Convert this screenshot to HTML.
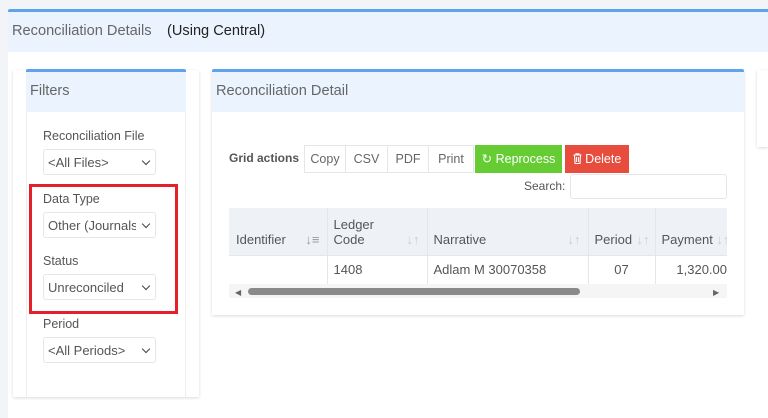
<!DOCTYPE html>
<html><head><style>
*{box-sizing:border-box;margin:0;padding:0}
body{width:768px;height:418px;background:#f3f4f7;font-family:"Liberation Sans",sans-serif;position:relative;overflow:hidden;color:#444}
.a{position:absolute}
.sel{position:absolute;left:43px;width:113px;height:26px;border:1px solid #e3e6ea;border-radius:3px;background:#fff;font-size:13px;color:#555;padding:5px 0 0 4px;white-space:nowrap;overflow:hidden}
.sel:after{content:"";position:absolute;right:6px;top:8px;width:5px;height:5px;border-right:1.5px solid #444;border-bottom:1.5px solid #444;transform:rotate(45deg)}
.sel span{display:block;width:88px;overflow:hidden}
.lbl{position:absolute;left:43px;font-size:12.5px;color:#555}
.btn{position:absolute;top:145px;height:28px;border:1px solid #e3e6ea;background:#fff;font-size:12.5px;color:#666;text-align:center;line-height:26px}
th,td{font-size:13px;color:#555;text-align:left;font-weight:normal}
th{vertical-align:bottom;padding-bottom:8px}
</style></head><body>
<div class="a" style="left:8px;top:9px;width:760px;height:409px;background:#fff"></div>
<div class="a" style="left:8px;top:9px;width:760px;height:3px;background:#5ea3ec;border-radius:2px 0 0 0"></div>
<div class="a" style="left:8px;top:12px;width:760px;height:40px;background:#ebf4fe"></div>
<div class="a" style="left:12px;top:23px;font-size:14.6px;color:#666">Reconciliation Details</div>
<div class="a" style="left:167px;top:23px;font-size:14.6px;color:#222">(Using Central)</div>

<div class="a" style="left:13px;top:70px;width:186px;height:327px;background:#fff;box-shadow:0 1px 3px rgba(0,0,0,.15)"></div>
<div class="a" style="left:26px;top:69px;width:160px;height:328px;border-left:1px solid #eee;border-right:1px solid #eee"></div>
<div class="a" style="left:26px;top:69px;width:160px;height:3px;background:#5ea3ec;border-radius:2px 2px 0 0"></div>
<div class="a" style="left:26px;top:72px;width:160px;height:40px;background:#ebf4fe"></div>
<div class="a" style="left:30px;top:83px;font-size:14.5px;color:#666">Filters</div>
<div class="lbl" style="top:129px">Reconciliation File</div>
<div class="sel" style="top:149px"><span>&lt;All Files&gt;</span></div>
<div class="lbl" style="top:192px">Data Type</div>
<div class="sel" style="top:212px"><span>Other (Journals)</span></div>
<div class="lbl" style="top:254px">Status</div>
<div class="sel" style="top:274px"><span>Unreconciled</span></div>
<div class="lbl" style="top:317px">Period</div>
<div class="sel" style="top:337px"><span>&lt;All Periods&gt;</span></div>
<div class="a" style="left:29px;top:184px;width:149px;height:130px;border:3px solid #e4202a"></div>

<div class="a" style="left:212px;top:70px;width:532px;height:245px;background:#fff;box-shadow:0 1px 3px rgba(0,0,0,.15)"></div>
<div class="a" style="left:212px;top:69px;width:532px;height:3px;background:#5ea3ec;border-radius:2px 2px 0 0"></div>
<div class="a" style="left:212px;top:72px;width:532px;height:40px;background:#ebf4fe"></div>
<div class="a" style="left:216px;top:83px;font-size:14.6px;color:#666">Reconciliation Detail</div>
<div class="a" style="left:757px;top:70px;width:11px;height:77px;background:#fff;box-shadow:0 1px 3px rgba(0,0,0,.15)"></div>

<div class="a" style="left:229px;top:151px;font-size:12px;font-weight:bold;color:#555">Grid actions</div>
<div class="btn" style="left:304px;width:42px">Copy</div>
<div class="btn" style="left:345px;width:43px">CSV</div>
<div class="btn" style="left:387px;width:42px">PDF</div>
<div class="btn" style="left:428px;width:46px">Print</div>
<div class="btn" style="left:475px;width:87px;background:#66cc33;border-color:#66cc33;color:#fff">&#x21bb; Reprocess</div>
<div class="btn" style="left:565px;width:64px;background:#e74c3c;border-color:#e74c3c;color:#fff"><svg width="9" height="11" viewBox="0 0 9 11" style="vertical-align:-1px"><path d="M0.5 2h8M3 2V0.8h3V2M1.5 2l0.5 8.5h5l0.5-8.5M3.5 4v5M5.5 4v5" stroke="#fff" stroke-width="1.1" fill="none"/></svg> Delete</div>
<div class="a" style="left:524px;top:179px;font-size:12px;color:#555">Search:</div>
<div class="a" style="left:570px;top:174px;width:157px;height:25px;border:1px solid #e3e6ea;border-radius:3px"></div>

<div class="a" style="left:229px;top:208px;width:498px;height:90px;overflow:hidden">
<table style="border-collapse:collapse;width:520px;table-layout:fixed">
<tr style="background:#eef2f7;height:47px">
<th style="width:98px;padding-left:7px;border-right:1px solid #e3e6ea">Identifier <span style="float:right;margin-right:7px;color:#999">↓≡</span></th>
<th style="width:100px;padding-left:6px;border-right:1px solid #e3e6ea">Ledger<br>Code <span style="float:right;margin-right:7px;color:#ccc">↓↑</span></th>
<th style="width:161px;padding-left:6px;border-right:1px solid #e3e6ea">Narrative <span style="float:right;margin-right:7px;color:#ccc">↓↑</span></th>
<th style="width:67px;padding-left:6px;border-right:1px solid #e3e6ea">Period <span style="float:right;margin-right:5px;color:#ccc">↓↑</span></th>
<th style="width:94px;padding-left:6px">Payment <span style="color:#ccc">↓↑</span></th></tr>
<tr style="height:29px;border-top:1px solid #e3e6ea;border-bottom:1px solid #e3e6ea">
<td style="border-right:1px solid #e3e6ea"></td>
<td style="padding-left:6px;border-right:1px solid #e3e6ea">1408</td>
<td style="padding-left:6px;border-right:1px solid #e3e6ea">Adlam M 30070358</td>
<td style="text-align:center;border-right:1px solid #e3e6ea">07</td>
<td style="text-align:right;padding-right:22px">1,320.00</td></tr>
</table>
<div class="a" style="left:0;top:76px;width:498px;height:14px;background:#f5f5f5"></div>
<div class="a" style="left:6px;top:80px;font-size:8px;color:#666">◀</div>
<div class="a" style="left:19px;top:80px;width:332px;height:7px;background:#8a8a8a;border-radius:4px"></div>
<div class="a" style="left:484px;top:80px;font-size:8px;color:#666">▶</div>
</div>
</body></html>
